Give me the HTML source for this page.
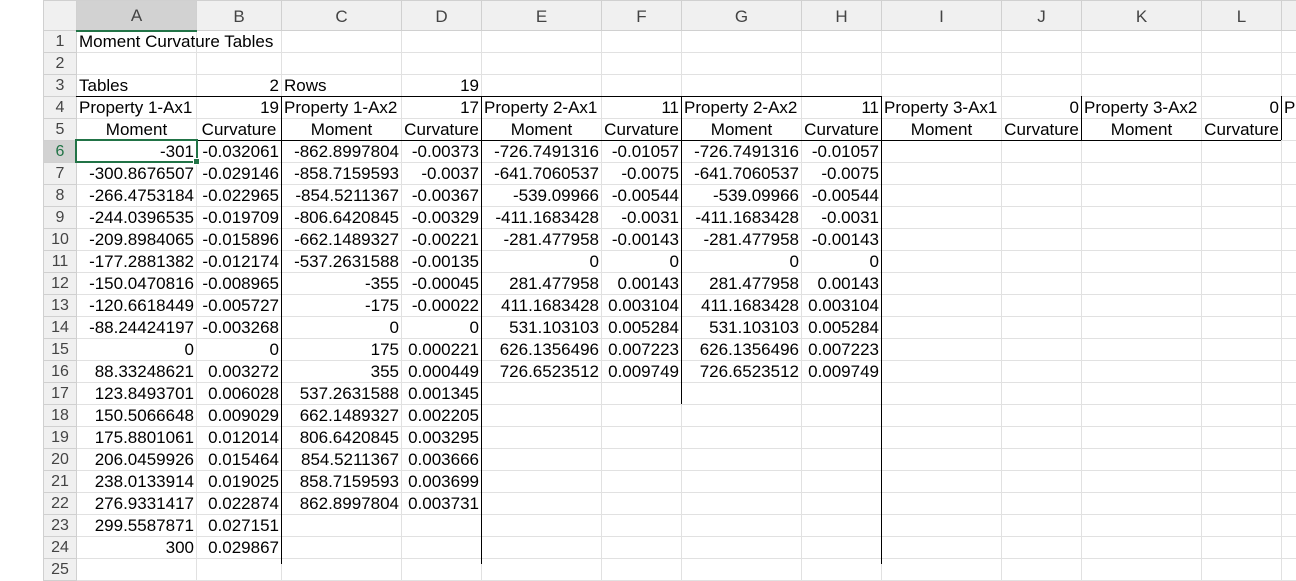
<!DOCTYPE html>
<html><head><style>
body{margin:0;width:1296px;height:564px;overflow:hidden;background:#fff;font-family:"Liberation Sans",Arial,sans-serif;position:relative}
table{position:absolute;left:43px;top:0;width:1258px;border-collapse:collapse;table-layout:fixed;font-size:17px;color:#000}
td{height:22px;border:1px solid #e1e1e1;padding:0 2px;white-space:nowrap;overflow:visible;text-align:right;line-height:20px;box-sizing:border-box}
td.l{text-align:left}td.c{text-align:center}
tr.h td{height:30px;background:#f0f0f0;color:#444;text-align:center;border-color:#d0d0d0;line-height:26px;padding:2px 0 0;font-size:17px}
tr{height:22px}
tr.h{height:30px}
td.rh{background:#f0f0f0;color:#444;text-align:center;border-color:#d0d0d0;padding:0;font-size:16px}
.ln{position:absolute;background:#000}
</style></head><body>
<table>
<colgroup><col style="width:33px"><col style="width:120px"><col style="width:85px"><col style="width:120px"><col style="width:80px"><col style="width:120px"><col style="width:80px"><col style="width:120px"><col style="width:80px"><col style="width:120px"><col style="width:80px"><col style="width:120px"><col style="width:80px"><col style="width:20px"></colgroup>
<tr class="h"><td></td><td style="background:#d2d2d2;border-bottom:2px solid #217346">A</td><td>B</td><td>C</td><td>D</td><td>E</td><td>F</td><td>G</td><td>H</td><td>I</td><td>J</td><td>K</td><td>L</td><td></td></tr>
<tr><td class="rh">1</td><td class="l" style="overflow:visible">Moment Curvature Tables</td><td></td><td></td><td></td><td></td><td></td><td></td><td></td><td></td><td></td><td></td><td></td><td></td></tr>
<tr><td class="rh">2</td><td></td><td></td><td></td><td></td><td></td><td></td><td></td><td></td><td></td><td></td><td></td><td></td><td></td></tr>
<tr><td class="rh">3</td><td class="l">Tables</td><td>2</td><td class="l">Rows</td><td>19</td><td></td><td></td><td></td><td></td><td></td><td></td><td></td><td></td><td></td></tr>
<tr><td class="rh">4</td><td class="l">Property 1-Ax1</td><td>19</td><td class="l">Property 1-Ax2</td><td>17</td><td class="l">Property 2-Ax1</td><td>11</td><td class="l">Property 2-Ax2</td><td>11</td><td class="l">Property 3-Ax1</td><td>0</td><td class="l">Property 3-Ax2</td><td>0</td><td class="l" style="padding:0 2px">P</td></tr>
<tr><td class="rh">5</td><td class="c">Moment</td><td class="c">Curvature</td><td class="c">Moment</td><td class="c">Curvature</td><td class="c">Moment</td><td class="c">Curvature</td><td class="c">Moment</td><td class="c">Curvature</td><td class="c">Moment</td><td class="c">Curvature</td><td class="c">Moment</td><td class="c">Curvature</td><td></td></tr>
<tr><td class="rh" style="color:#217346;background:#d2d2d2">6</td><td>-301</td><td>-0.032061</td><td>-862.8997804</td><td>-0.00373</td><td>-726.7491316</td><td>-0.01057</td><td>-726.7491316</td><td>-0.01057</td><td></td><td></td><td></td><td></td><td></td></tr>
<tr><td class="rh">7</td><td>-300.8676507</td><td>-0.029146</td><td>-858.7159593</td><td>-0.0037</td><td>-641.7060537</td><td>-0.0075</td><td>-641.7060537</td><td>-0.0075</td><td></td><td></td><td></td><td></td><td></td></tr>
<tr><td class="rh">8</td><td>-266.4753184</td><td>-0.022965</td><td>-854.5211367</td><td>-0.00367</td><td>-539.09966</td><td>-0.00544</td><td>-539.09966</td><td>-0.00544</td><td></td><td></td><td></td><td></td><td></td></tr>
<tr><td class="rh">9</td><td>-244.0396535</td><td>-0.019709</td><td>-806.6420845</td><td>-0.00329</td><td>-411.1683428</td><td>-0.0031</td><td>-411.1683428</td><td>-0.0031</td><td></td><td></td><td></td><td></td><td></td></tr>
<tr><td class="rh">10</td><td>-209.8984065</td><td>-0.015896</td><td>-662.1489327</td><td>-0.00221</td><td>-281.477958</td><td>-0.00143</td><td>-281.477958</td><td>-0.00143</td><td></td><td></td><td></td><td></td><td></td></tr>
<tr><td class="rh">11</td><td>-177.2881382</td><td>-0.012174</td><td>-537.2631588</td><td>-0.00135</td><td>0</td><td>0</td><td>0</td><td>0</td><td></td><td></td><td></td><td></td><td></td></tr>
<tr><td class="rh">12</td><td>-150.0470816</td><td>-0.008965</td><td>-355</td><td>-0.00045</td><td>281.477958</td><td>0.00143</td><td>281.477958</td><td>0.00143</td><td></td><td></td><td></td><td></td><td></td></tr>
<tr><td class="rh">13</td><td>-120.6618449</td><td>-0.005727</td><td>-175</td><td>-0.00022</td><td>411.1683428</td><td>0.003104</td><td>411.1683428</td><td>0.003104</td><td></td><td></td><td></td><td></td><td></td></tr>
<tr><td class="rh">14</td><td>-88.24424197</td><td>-0.003268</td><td>0</td><td>0</td><td>531.103103</td><td>0.005284</td><td>531.103103</td><td>0.005284</td><td></td><td></td><td></td><td></td><td></td></tr>
<tr><td class="rh">15</td><td>0</td><td>0</td><td>175</td><td>0.000221</td><td>626.1356496</td><td>0.007223</td><td>626.1356496</td><td>0.007223</td><td></td><td></td><td></td><td></td><td></td></tr>
<tr><td class="rh">16</td><td>88.33248621</td><td>0.003272</td><td>355</td><td>0.000449</td><td>726.6523512</td><td>0.009749</td><td>726.6523512</td><td>0.009749</td><td></td><td></td><td></td><td></td><td></td></tr>
<tr><td class="rh">17</td><td>123.8493701</td><td>0.006028</td><td>537.2631588</td><td>0.001345</td><td></td><td></td><td></td><td></td><td></td><td></td><td></td><td></td><td></td></tr>
<tr><td class="rh">18</td><td>150.5066648</td><td>0.009029</td><td>662.1489327</td><td>0.002205</td><td></td><td></td><td></td><td></td><td></td><td></td><td></td><td></td><td></td></tr>
<tr><td class="rh">19</td><td>175.8801061</td><td>0.012014</td><td>806.6420845</td><td>0.003295</td><td></td><td></td><td></td><td></td><td></td><td></td><td></td><td></td><td></td></tr>
<tr><td class="rh">20</td><td>206.0459926</td><td>0.015464</td><td>854.5211367</td><td>0.003666</td><td></td><td></td><td></td><td></td><td></td><td></td><td></td><td></td><td></td></tr>
<tr><td class="rh">21</td><td>238.0133914</td><td>0.019025</td><td>858.7159593</td><td>0.003699</td><td></td><td></td><td></td><td></td><td></td><td></td><td></td><td></td><td></td></tr>
<tr><td class="rh">22</td><td>276.9331417</td><td>0.022874</td><td>862.8997804</td><td>0.003731</td><td></td><td></td><td></td><td></td><td></td><td></td><td></td><td></td><td></td></tr>
<tr><td class="rh">23</td><td>299.5587871</td><td>0.027151</td><td></td><td></td><td></td><td></td><td></td><td></td><td></td><td></td><td></td><td></td><td></td></tr>
<tr><td class="rh">24</td><td>300</td><td>0.029867</td><td></td><td></td><td></td><td></td><td></td><td></td><td></td><td></td><td></td><td></td><td></td></tr>
<tr><td class="rh">25</td><td></td><td></td><td></td><td></td><td></td><td></td><td></td><td></td><td></td><td></td><td></td><td></td><td></td></tr>
</table>
<div class="ln" style="left:76px;top:96px;width:805px;height:1px"></div>
<div class="ln" style="left:76px;top:140px;width:1205px;height:1px"></div>
<div class="ln" style="left:281px;top:96px;width:1px;height:468px"></div>
<div class="ln" style="left:481px;top:96px;width:1px;height:468px"></div>
<div class="ln" style="left:681px;top:96px;width:1px;height:308px"></div>
<div class="ln" style="left:881px;top:96px;width:1px;height:468px"></div>
<div class="ln" style="left:1081px;top:96px;width:1px;height:44px"></div>
<div class="ln" style="left:1281px;top:96px;width:1px;height:44px"></div>
<div style="position:absolute;left:75px;top:139px;width:119px;height:20px;border:2px solid #217346"></div>
<div style="position:absolute;left:193px;top:158px;width:5px;height:5px;background:#217346;border:1px solid #fff"></div>
</body></html>
